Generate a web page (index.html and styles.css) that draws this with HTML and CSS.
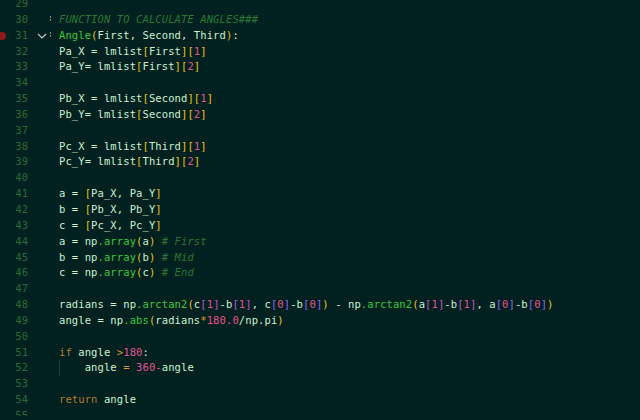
FILE: index.html
```html
<!DOCTYPE html>
<html>
<head>
<meta charset="utf-8">
<link rel="stylesheet" href="styles.css">
</head>
<body>
<div class="editor">
  <div class="row"><span class="ln">29</span><span class="gut"></span><span class="code"></span></div>
  <div class="row"><span class="ln">30</span><span class="gut"><span class="mark"></span></span><span class="code"><span class="cm">FUNCTION TO CALCULATE ANGLES###</span></span></div>
  <div class="row"><span class="bp"></span><span class="ln">31</span><span class="gut"><svg class="chev" width="10" height="6" viewBox="0 0 10 6"><path d="M1 1 L5 5 L9 1" fill="none" stroke="#c8c8c8" stroke-width="1.2"/></svg><span class="mark"></span></span><span class="code"><span class="fn">Angle</span><span class="b1">(</span>First, Second, Third<span class="b1">)</span>:</span></div>
  <div class="row"><span class="ln">32</span><span class="gut"></span><span class="code">Pa_X = lmlist<span class="b1">[</span>First<span class="b1">]</span><span class="b1">[</span><span class="nm">1</span><span class="b1">]</span></span></div>
  <div class="row"><span class="ln">33</span><span class="gut"></span><span class="code">Pa_Y= lmlist<span class="b1">[</span>First<span class="b1">]</span><span class="b1">[</span><span class="nm">2</span><span class="b1">]</span></span></div>
  <div class="row"><span class="ln">34</span><span class="gut"></span><span class="code"></span></div>
  <div class="row"><span class="ln">35</span><span class="gut"></span><span class="code">Pb_X = lmlist<span class="b1">[</span>Second<span class="b1">]</span><span class="b1">[</span><span class="nm">1</span><span class="b1">]</span></span></div>
  <div class="row"><span class="ln">36</span><span class="gut"></span><span class="code">Pb_Y= lmlist<span class="b1">[</span>Second<span class="b1">]</span><span class="b1">[</span><span class="nm">2</span><span class="b1">]</span></span></div>
  <div class="row"><span class="ln">37</span><span class="gut"></span><span class="code"></span></div>
  <div class="row"><span class="ln">38</span><span class="gut"></span><span class="code">Pc_X = lmlist<span class="b1">[</span>Third<span class="b1">]</span><span class="b1">[</span><span class="nm">1</span><span class="b1">]</span></span></div>
  <div class="row"><span class="ln">39</span><span class="gut"></span><span class="code">Pc_Y= lmlist<span class="b1">[</span>Third<span class="b1">]</span><span class="b1">[</span><span class="nm">2</span><span class="b1">]</span></span></div>
  <div class="row"><span class="ln">40</span><span class="gut"></span><span class="code"></span></div>
  <div class="row"><span class="ln">41</span><span class="gut"></span><span class="code">a = <span class="b1">[</span>Pa_X, Pa_Y<span class="b1">]</span></span></div>
  <div class="row"><span class="ln">42</span><span class="gut"></span><span class="code">b = <span class="b1">[</span>Pb_X, Pb_Y<span class="b1">]</span></span></div>
  <div class="row"><span class="ln">43</span><span class="gut"></span><span class="code">c = <span class="b1">[</span>Pc_X, Pc_Y<span class="b1">]</span></span></div>
  <div class="row"><span class="ln">44</span><span class="gut"></span><span class="code">a = np<span class="fn">.array</span><span class="b1">(</span>a<span class="b1">)</span> <span class="cm"># First</span></span></div>
  <div class="row"><span class="ln">45</span><span class="gut"></span><span class="code">b = np<span class="fn">.array</span><span class="b1">(</span>b<span class="b1">)</span> <span class="cm"># Mid</span></span></div>
  <div class="row"><span class="ln">46</span><span class="gut"></span><span class="code">c = np<span class="fn">.array</span><span class="b1">(</span>c<span class="b1">)</span> <span class="cm"># End</span></span></div>
  <div class="row"><span class="ln">47</span><span class="gut"></span><span class="code"></span></div>
  <div class="row"><span class="ln">48</span><span class="gut"></span><span class="code">radians = np<span class="fn">.arctan2</span><span class="b1">(</span>c<span class="b2">[</span><span class="nm">1</span><span class="b2">]</span>-b<span class="b2">[</span><span class="nm">1</span><span class="b2">]</span>, c<span class="b3">[</span><span class="nm">0</span><span class="b3">]</span>-b<span class="b3">[</span><span class="nm">0</span><span class="b3">]</span><span class="b1">)</span> - np<span class="fn">.arctan2</span><span class="b1">(</span>a<span class="b2">[</span><span class="nm">1</span><span class="b2">]</span>-b<span class="b2">[</span><span class="nm">1</span><span class="b2">]</span>, a<span class="b3">[</span><span class="nm">0</span><span class="b3">]</span>-b<span class="b3">[</span><span class="nm">0</span><span class="b3">]</span><span class="b1">)</span></span></div>
  <div class="row"><span class="ln">49</span><span class="gut"></span><span class="code">angle = np<span class="fn">.abs</span><span class="b1">(</span>radians<span class="op">*</span><span class="nm">180.0</span>/np.pi<span class="b1">)</span></span></div>
  <div class="row"><span class="ln">50</span><span class="gut"></span><span class="code"></span></div>
  <div class="row"><span class="ln">51</span><span class="gut"></span><span class="code"><span class="kw">if</span> angle <span class="op">&gt;</span><span class="nm">180</span>:</span></div>
  <div class="row"><span class="ln">52</span><span class="gut"></span><span class="code"><span class="indent">    </span>angle <span class="op">=</span> <span class="nm">360</span><span class="nm">-</span>angle</span></div>
  <div class="row"><span class="ln">53</span><span class="gut"></span><span class="code"></span></div>
  <div class="row"><span class="ln">54</span><span class="gut"></span><span class="code"><span class="kw">return</span> angle</span></div>
  <div class="row"><span class="ln">55</span><span class="gut"></span><span class="code"></span></div>
</div>
</body>
</html>
```

FILE: styles.css
```css
html, body {
  margin: 0;
  padding: 0;
  background: #002120;
  overflow: hidden;
}
.editor {
  width: 640px;
  height: 420px;
  overflow: hidden;
  background: #002120;
  font-family: "DejaVu Sans Mono", "Liberation Mono", monospace;
  font-size: 10.5px;
  color: #cdf2d0;
  margin-top: -4px;
}
.row {
  position: relative;
  display: flex;
  height: 15.85px;
  line-height: 15.85px;
  white-space: pre;
}
.ln {
  width: 28px;
  text-align: right;
  color: #2c6a35;
  flex: none;
}
.gut {
  width: 31px;
  flex: none;
  display: flex;
  align-items: center;
  position: relative;
}
.chev {
  margin-left: 9px;
}
.mark {
  position: absolute;
  left: 22px;
  top: 4px;
  width: 1px;
  height: 6px;
  background: repeating-linear-gradient(to bottom, #7a8a80 0 2px, transparent 2px 3px);
}
.code {
  flex: 1;
  letter-spacing: 0.1px;
}
.bp {
  position: absolute;
  left: -2px;
  top: 4px;
  width: 8px;
  height: 8px;
  border-radius: 50%;
  background: #8e1a1c;
}
.cm { color: #2a7834; font-style: italic; }
.fn { color: #3dc93d; }
.b1 { color: #f2c21a; }
.b2 { color: #c94fd6; }
.b3 { color: #9a60e8; }
.nm { color: #e8528c; }
.kw { color: #b87a2c; }
.op { color: #e0952e; }
.indent {
  display: inline-block;
  box-shadow: inset 1px 0 0 #1d3a34;
}
```
